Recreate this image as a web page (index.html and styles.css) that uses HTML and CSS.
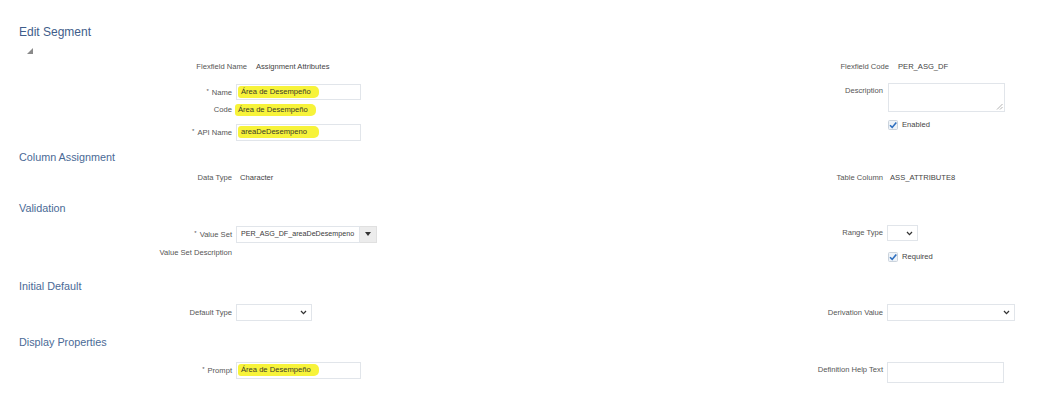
FILE: index.html
```html
<!DOCTYPE html>
<html lang="es">
<head>
<meta charset="utf-8">
<title>Edit Segment</title>
<link rel="stylesheet" href="styles.css">
</head>
<body>
<div class="page">
  <h1 class="title">Edit Segment</h1>
  <div class="grip"><svg width="6" height="6" viewBox="0 0 6 6"><polygon points="6,0 6,6 0,6" fill="#8a8a8a"/></svg></div>

  <div class="sec s1">
    <div class="lcol">
      <div class="row ff h16"><span class="lbl">Flexfield Name</span><span class="val">Assignment Attributes</span></div>
      <div class="row mt8"><span class="lbl"><span class="ast">*</span>Name</span><div class="input h16"><span class="hl">Área de Desempeño</span></div></div>
      <div class="row h14 mt1"><span class="lbl">Code</span><span class="val tight"><span class="hl">Área de Desempeño</span></span></div>
      <div class="row mt7"><span class="lbl"><span class="ast">*</span>API Name</span><div class="input h17"><span class="hl">areaDeDesempeno</span></div></div>
    </div>
    <div class="rcol">
      <div class="row ff2 h16"><span class="lbl">Flexfield Code</span><span class="val">PER_ASG_DF</span></div>
      <div class="row mt8 top"><span class="lbl">Description</span><div class="textarea"><svg class="rgrip" width="7" height="7" viewBox="0 0 7 7"><path d="M6.5 1 L1 6.5 M6.5 4 L4 6.5" stroke="#a0a0a0" stroke-width="0.8" fill="none"/></svg></div></div>
      <div class="row mt7 h12"><span></span><span class="chk"><svg width="10" height="10" viewBox="0 0 10 10"><rect x="0.5" y="0.5" width="9" height="9" rx="1" fill="#eef3f8" stroke="#cbd3dc"/><path d="M2 5.2 L4.2 7.4 L8.3 2.4" stroke="#2f6fbf" stroke-width="1.6" fill="none"/></svg><span class="val">Enabled</span></span></div>
    </div>
  </div>

  <h2 class="sh mt8">Column Assignment</h2>
  <div class="sec mt5">
    <div class="lcol">
      <div class="row h16"><span class="lbl">Data Type</span><span class="val ro">Character</span></div>
    </div>
    <div class="rcol">
      <div class="row h16"><span class="lbl">Table Column</span><span class="val ro2">ASS_ATTRIBUTE8</span></div>
    </div>
  </div>

  <h2 class="sh mt14">Validation</h2>
  <div class="sec mt9">
    <div class="lcol">
      <div class="row"><span class="lbl"><span class="ast">*</span>Value Set</span><div class="combo"><div class="input h17 vs"><span class="val in">PER_ASG_DF_areaDeDesempeno</span></div><div class="dbtn"><svg width="6" height="4" viewBox="0 0 6 4"><polygon points="0,0 6,0 3,4" fill="#333"/></svg></div></div></div>
      <div class="row h14 mt2"><span class="lbl">Value Set Description</span><span></span></div>
    </div>
    <div class="rcol">
      <div class="row"><span class="lbl">Range Type</span><div class="select h16 w31"><svg width="7" height="5" viewBox="0 0 7 5"><path d="M1 1 L3.5 3.6 L6 1" stroke="#333" stroke-width="1.3" fill="none"/></svg></div></div>
      <div class="row mt10 h12"><span></span><span class="chk"><svg width="10" height="10" viewBox="0 0 10 10"><rect x="0.5" y="0.5" width="9" height="9" rx="1" fill="#eef3f8" stroke="#cbd3dc"/><path d="M2 5.2 L4.2 7.4 L8.3 2.4" stroke="#2f6fbf" stroke-width="1.6" fill="none"/></svg><span class="val">Required</span></span></div>
    </div>
  </div>

  <h2 class="sh mt15">Initial Default</h2>
  <div class="sec mt10">
    <div class="lcol">
      <div class="row"><span class="lbl">Default Type</span><div class="select h17 w76"><svg width="7" height="5" viewBox="0 0 7 5"><path d="M1 1 L3.5 3.6 L6 1" stroke="#333" stroke-width="1.3" fill="none"/></svg></div></div>
    </div>
    <div class="rcol">
      <div class="row"><span class="lbl">Derivation Value</span><div class="select h17 w128"><svg width="7" height="5" viewBox="0 0 7 5"><path d="M1 1 L3.5 3.6 L6 1" stroke="#333" stroke-width="1.3" fill="none"/></svg></div></div>
    </div>
  </div>

  <h2 class="sh mt13">Display Properties</h2>
  <div class="sec mt11">
    <div class="lcol">
      <div class="row"><span class="lbl"><span class="ast">*</span>Prompt</span><div class="input h17"><span class="hl">Área de Desempeño</span></div></div>
    </div>
    <div class="rcol">
      <div class="row top mt1"><span class="lbl">Definition Help Text</span><div class="input h21 w116"></div></div>
    </div>
  </div>
</div>
</body>
</html>
```

FILE: styles.css
```css
html, body {
  margin: 0;
  padding: 0;
  background: #ffffff;
}
body {
  font-family: "Liberation Sans", Arial, sans-serif;
  color: #333333;
}
.page {
  width: 1039px;
  height: 401px;
  overflow: hidden;
}
.title {
  margin: 0;
  padding: 24px 0 0 19px;
  font-size: 12px;
  line-height: 16px;
  height: 16px;
  font-weight: normal;
  color: #3f5d8a;
}
.grip {
  margin: 8px 0 0 27px;
  height: 6px;
  line-height: 0;
}
.s1 { margin-top: 5px; }
.sec {
  display: flex;
  align-items: flex-start;
}
.lcol { width: 780px; flex: none; }
.rcol { flex: 1; }

.row {
  display: grid;
  grid-template-columns: 232px auto;
  column-gap: 4px;
  align-items: center;
  justify-content: start;
}
.rcol .row {
  grid-template-columns: 103px auto;
  column-gap: 4px;
}
.row.ff { grid-template-columns: 247px auto; column-gap: 9px; }
.rcol .row.ff2 { grid-template-columns: 109px auto; column-gap: 9px; }
.row.top { align-items: start; }

.h12 { height: 12px; }
.h14 { height: 14px; }
.h16 { height: 16px; }
.h17 { height: 17px; }
.h21 { height: 21px; }
.mt1 { margin-top: 1px; }
.mt2 { margin-top: 2px; }
.mt5 { margin-top: 5px; }
.mt7 { margin-top: 7px; }
.mt8 { margin-top: 8px; }
.mt9 { margin-top: 9px; }
.mt10 { margin-top: 10px; }
.mt11 { margin-top: 11px; }
.mt13 { margin-top: 13px; }
.mt14 { margin-top: 14px; }
.mt15 { margin-top: 15px; }

.lbl {
  font-size: 7.6px;
  line-height: 16px;
  color: #555555;
  text-align: right;
  white-space: nowrap;
}
.ast {
  font-size: 6px;
  vertical-align: 2px;
  margin-right: 3px;
}
.val {
  font-size: 7.6px;
  line-height: 12px;
  color: #444444;
  white-space: nowrap;
}
.val.ro { padding-left: 4px; }
.val.ro2 { padding-left: 3px; }
.val.in { padding-left: 3px; color: #3a3a3a; font-size: 7.15px; }

.hl {
  display: inline-block;
  box-sizing: border-box;
  width: 81px;
  height: 12px;
  line-height: 12px;
  padding-left: 3px;
  background: #f7f33a;
  border-radius: 3px 5px 5px 3px;
  font-size: 7.6px;
  color: #3a3a2a;
  white-space: nowrap;
}
.tight .hl { margin-left: -1px; }

.input {
  box-sizing: border-box;
  width: 125px;
  border: 1px solid #e1e5ea;
  background: #ffffff;
  display: flex;
  align-items: center;
  padding-left: 1px;
  overflow: hidden;
}
.input.w116 { width: 117px; }
.combo {
  display: flex;
}
.input.vs { width: 124px; }
.dbtn {
  box-sizing: border-box;
  width: 17px;
  height: 17px;
  background: #ececec;
  border: 1px solid #e0e0e0;
  border-left: none;
  display: flex;
  align-items: center;
  justify-content: center;
}
.select {
  box-sizing: border-box;
  border: 1px solid #e1e5ea;
  background: #ffffff;
  display: flex;
  align-items: center;
  justify-content: flex-end;
  padding-right: 4px;
}
.w31 { width: 31px; }
.w76 { width: 76px; }
.w128 { width: 128px; }
.textarea {
  box-sizing: border-box;
  width: 117px;
  height: 29px;
  border: 1px solid #e1e5ea;
  background: #ffffff;
  display: flex;
  align-items: flex-end;
  justify-content: flex-end;
  padding: 0 1px 1px 0;
  margin-left: 1px;
}
.rgrip { display: block; }
.chk {
  display: flex;
  align-items: center;
  gap: 4px;
  margin-left: 1px;
}
.chk svg { display: block; }

.sh {
  margin-bottom: 0;
  margin-left: 0;
  margin-right: 0;
  padding-left: 19px;
  font-size: 10.8px;
  line-height: 16px;
  height: 16px;
  font-weight: normal;
  color: #4a6a96;
}
```
